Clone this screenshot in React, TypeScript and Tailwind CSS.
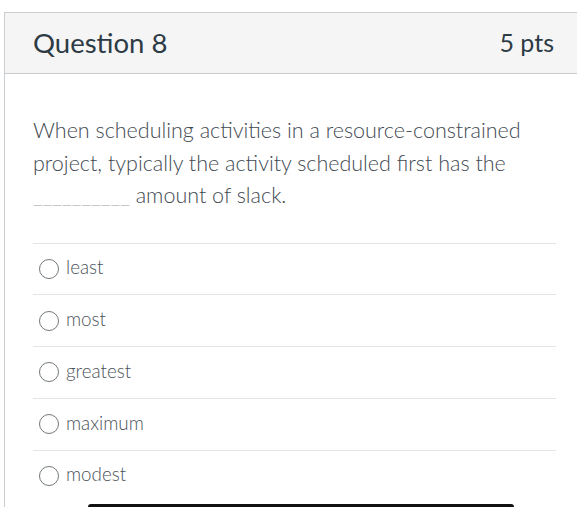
import React from "react";

const options = ["least", "most", "greatest", "maximum", "modest"];

export default function App() {
  return (
    <div
      className="relative h-[507px] w-[577px] overflow-hidden bg-white"
      style={{ fontFamily: "Lato, 'Open Sans', sans-serif" }}
    >
      <div className="ml-[4px] mt-[12px] h-[495px] border-l border-t border-[#c7cdd1]">
        <div className="flex h-[61px] items-center justify-between border-b border-[#c7cdd1] bg-[#f5f5f5] pl-[28px] pr-[23px]">
          <span className="text-[27.5px] text-[#2d3b45]">Question 8</span>
          <span className="text-[25px] text-[#2d3b45]">5 pts</span>
        </div>
        <div className="pl-[28px] pr-[21px] pt-[40px]">
          <p className="whitespace-nowrap text-[21.5px] font-light leading-[32.5px] text-[#3f4a52]">
            When scheduling activities in a resource-constrained
            <br />
            project, typically the activity scheduled first has the
            <br />
            <span className="text-[#9aa0a4]">__________</span> amount of slack.
          </p>
          <div className="mt-[31px]">
            {options.map((o) => (
              <div
                key={o}
                className="flex h-[51.8px] items-center gap-[7px] border-t border-[#e2e4e5] pl-[6px]"
              >
                <span className="h-[20px] w-[20px] rounded-full border-[1.5px] border-[#73797d] bg-white" />
                <span className="pb-[3px] text-[18.8px] font-light text-[#4a5258]">{o}</span>
              </div>
            ))}
          </div>
        </div>
      </div>
      <div className="absolute left-[88px] top-[504px] h-[6px] w-[426px] rounded-t-[3px] bg-[#111]" />
    </div>
  );
}
